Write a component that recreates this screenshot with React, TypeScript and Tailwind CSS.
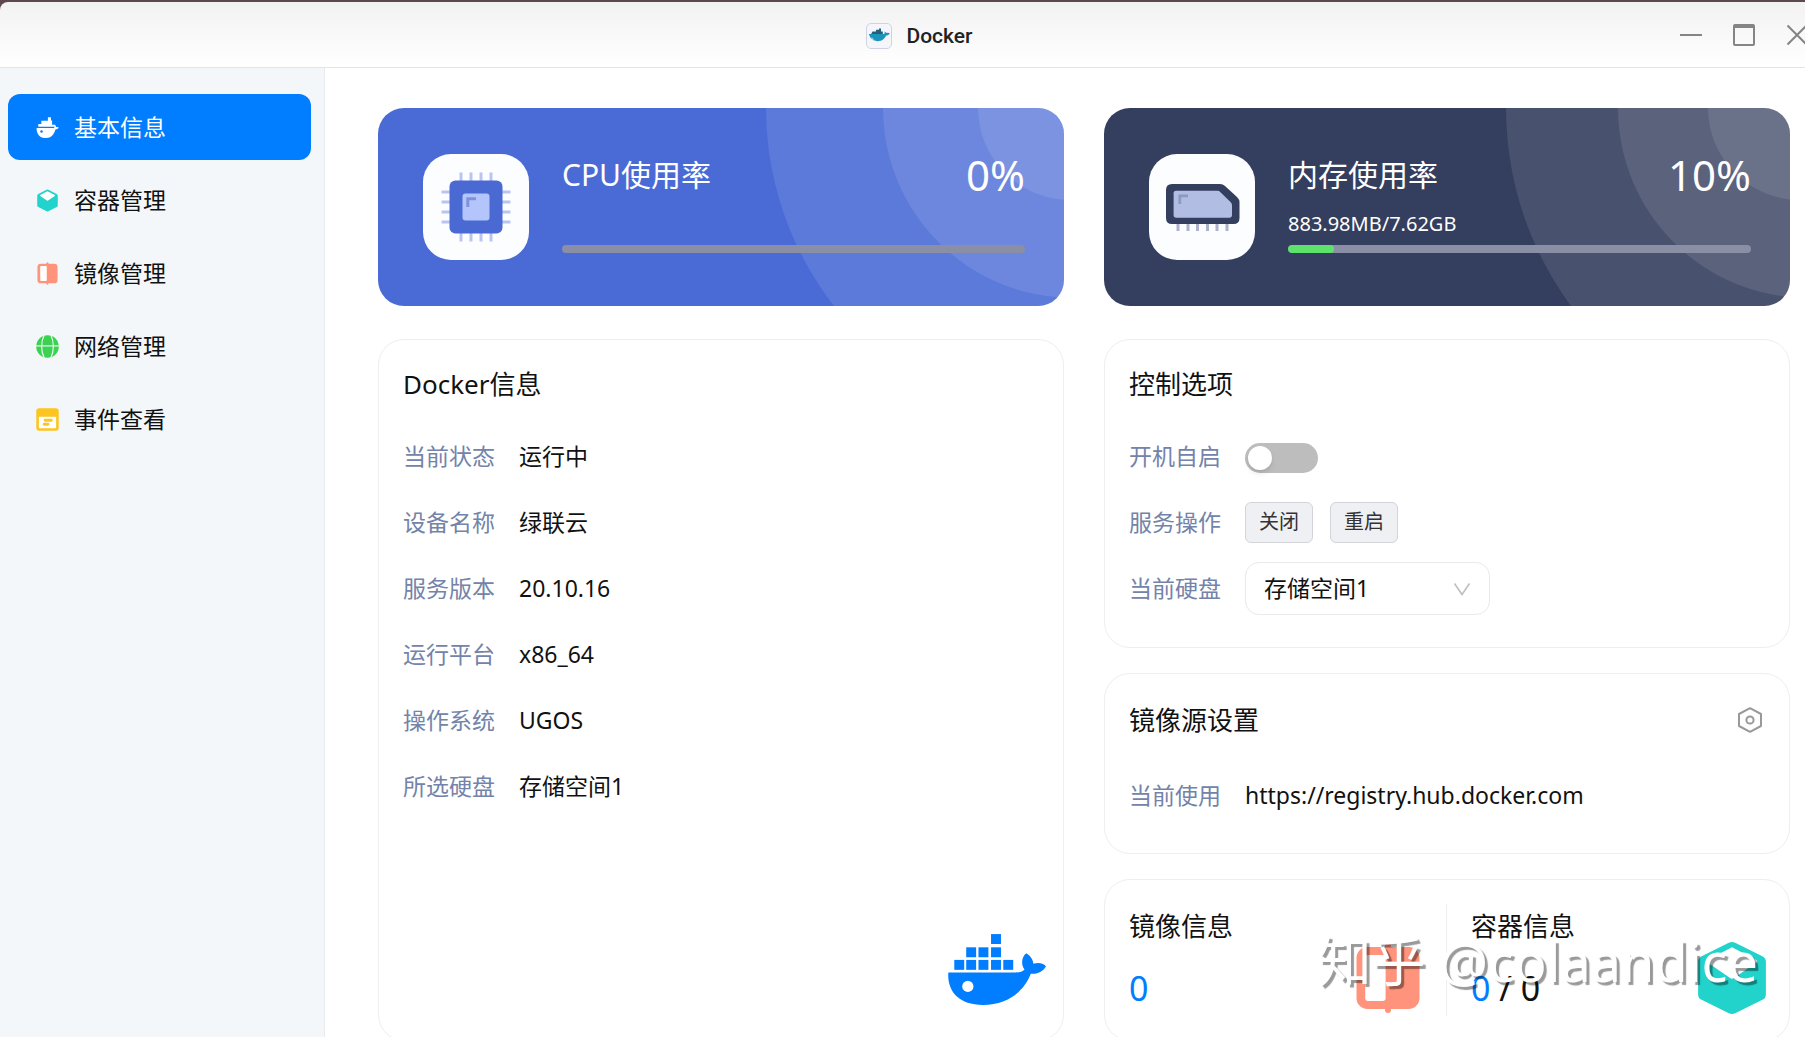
import React from 'react';

const navItems = [
  { label: '基本信息', icon: WhaleSmallIcon, active: true },
  { label: '容器管理', icon: CubeIcon, active: false },
  { label: '镜像管理', icon: MirrorIcon, active: false },
  { label: '网络管理', icon: GlobeIcon, active: false },
  { label: '事件查看', icon: EventIcon, active: false },
];

const dockerInfo = [
  { label: '当前状态', value: '运行中' },
  { label: '设备名称', value: '绿联云' },
  { label: '服务版本', value: '20.10.16' },
  { label: '运行平台', value: 'x86_64' },
  { label: '操作系统', value: 'UGOS' },
  { label: '所选硬盘', value: '存储空间1' },
];

type IconProps = { className?: string };

function WhaleSmallIcon({ className }: IconProps) {
  return (
    <svg viewBox="0 0 24 24" className={className} aria-hidden="true">
      <path d="M12.4 1.2h3.2v3.6h1.2v4.4h3.4v2H2.4V8.4h3.2V5h6.8z" fill="#fff" />
      <path d="M.6 12.4h18.2l1.4-2.4.9 1.4 2.6.3c-.6 1.6-1.9 2.3-3.4 2.4-1.5 5.2-4.7 8.9-9.7 8.9C4.2 23 .5 19.2.6 12.4z" fill="#fff" />
      <circle cx="5.8" cy="16.2" r="1.3" fill="#007eff" />
    </svg>
  );
}

function CubeIcon({ className }: IconProps) {
  return (
    <svg viewBox="0 0 24 24" className={className} aria-hidden="true">
      <path
        d="M11 .9a2.2 2.2 0 0 1 2 0l8.6 4.2a2 2 0 0 1 1.1 1.8v10.2a2 2 0 0 1-1.1 1.8L13 23.1a2.2 2.2 0 0 1-2 0l-8.6-4.2a2 2 0 0 1-1.1-1.8V6.9a2 2 0 0 1 1.1-1.8z"
        fill="#22d3cb"
      />
      <path d="M12 2.3l7.6 3.9c.5.3.5.7 0 1L12.6 12a1 1 0 0 1-1.2 0L4.4 7.2c-.5-.3-.5-.7 0-1z" fill="#fff" />
    </svg>
  );
}

function MirrorIcon({ className }: IconProps) {
  return (
    <svg viewBox="0 0 24 24" className={className} aria-hidden="true">
      <rect x="1.5" y="1.7" width="21" height="20.6" rx="3.6" fill="#ff937b" />
      <rect x="11" y=".3" width="2" height="23.4" rx="1" fill="#ff937b" />
      <rect x="4.4" y="4.3" width="6.8" height="15.4" rx="1" fill="#fff" />
    </svg>
  );
}

function GlobeIcon({ className }: IconProps) {
  return (
    <svg viewBox="0 0 24 24" className={className} aria-hidden="true">
      <circle cx="12" cy="12" r="11.8" fill="#3bd250" />
      <g fill="none" stroke="#f3f7fa" strokeWidth="1.2">
        <path d="M0 11.4h24" />
        <path d="M8.6 0c-3.6 7-3.6 17 0 24M15.4 0c3.6 7 3.6 17 0 24" />
      </g>
    </svg>
  );
}

function EventIcon({ className }: IconProps) {
  return (
    <svg viewBox="0 0 24 24" className={className} aria-hidden="true">
      <rect x=".3" y=".3" width="23.4" height="23.4" rx="3" fill="#fdc51f" />
      <rect x="3" y="9" width="18" height="12" rx=".8" fill="#fff" />
      <path d="M9.5 12.8h6.500M8.500 17h4" stroke="#fdc51f" strokeWidth="3" strokeLinecap="round" />
    </svg>
  );
}

function AppIcon() {
  return (
    <svg viewBox="0 0 26 26" className="h-[26px] w-[26px]" aria-hidden="true">
      <rect x=".5" y=".5" width="25" height="25" rx="4.5" fill="#f5f6fb" stroke="#cfd2e2" />
      <path d="M6.5 8.4H10V6.8h3V5.6h2v2.8h1.8v2.8H5z" fill="#23607a" />
      <path d="M2.8 11h14.5c1.2 0 1.7-.6 1.3-2.6l1.6 1.4 3.6.2c-.8 2-2.3 2.400-3.800 2.600-1.600 4-4.500 5.700-8.300 5.700-4.400 0-6.600-2-8-5.200z" fill="#1b94bd" />
      <path d="M6 14.2c1 2 2.6 3.6 5 4-2.6.2-4.6-1-5.800-3z" fill="#b7e4f2" />
    </svg>
  );
}

function CpuIcon() {
  return (
    <svg viewBox="0 0 106 106" className="h-full w-full" aria-hidden="true">
      <path
        d="M38 18.5v69M48 18.5v69M58 18.5v69M68 18.5v69M18.5 38h69M18.5 48h69M18.5 58h69M18.5 68h69"
        stroke="#b9c4f1"
        strokeWidth="3"
      />
      <rect x="26.5" y="26.5" width="53" height="53" rx="6" fill="#4a69d3" />
      <rect x="39.5" y="39.5" width="27" height="27" rx="3" fill="#b4c5fb" />
      <path d="M44.8 53v-8.2H53" fill="none" stroke="#7d92db" strokeWidth="3" />
    </svg>
  );
}

function MemoryIcon() {
  return (
    <svg viewBox="0 0 106 106" className="h-full w-full" aria-hidden="true">
      <path d="M29 70v7M39 70v7M48.5 70v7M58.5 70v7M68 70v7M78 70v7" stroke="#acb2cb" strokeWidth="3" />
      <path d="M23 30h48q3 0 5 2l12 11q2.5 2.5 2.5 5v16q0 6-6 6H23q-6 0-6-6V36q0-6 6-6z" fill="#343e5e" />
      <path d="M27 36.8h41.5q1.5 0 3 1.4l10 9.8q1.5 1.5 1.5 3v10q0 2.7-2.7 2.7H27.3q-2.7 0-2.7-2.7V39.5q0-2.7 2.4-2.7z" fill="#b1bde3" />
      <path d="M30.8 50v-8.2H39" fill="none" stroke="#8e98c0" strokeWidth="2.8" />
    </svg>
  );
}

function WhaleIcon() {
  return (
    <svg viewBox="0 0 296 214" className="h-[71px] w-[98px]" fill="#007eff" aria-hidden="true">
      <rect x="130" y="0" width="30" height="30" />
      <rect x="55" y="40" width="30" height="30" />
      <rect x="92" y="40" width="30" height="30" />
      <rect x="130" y="40" width="30" height="30" />
      <rect x="19" y="78" width="30" height="30" />
      <rect x="55" y="78" width="30" height="30" />
      <rect x="92" y="78" width="30" height="30" />
      <rect x="130" y="78" width="30" height="30" />
      <rect x="167" y="78" width="30" height="30" />
      <path d="M1 116H203C217 116 226 113 231 107C219 92 223 68 236 58C249 65 257 78 258 90C272 85 287 88 296 97C288 113 270 121 250 120C232 168 185 214 105 214C32 214-3 172 1 116Z" />
      <circle cx="60" cy="158" r="17" fill="#fff" />
    </svg>
  );
}

type UsageCardProps = {
  title: string;
  percent: number;
  detail?: string;
  color: string;
  icon: React.ReactNode;
  rings: { cx: number; r: number }[];
};

function UsageCard({ title, percent, detail, color, icon, rings }: UsageCardProps) {
  return (
    <section className={`relative overflow-hidden rounded-[26px] text-white ${color}`}>
      {/* Decorative rings */}
      <svg viewBox="0 0 320 198" className="absolute top-0 right-0 h-[198px] w-[320px]" aria-hidden="true">
        {rings.map((ring) => (
          <circle key={ring.r} cx={ring.cx} cy="0" r={ring.r} fill="#fff" fillOpacity="0.1" />
        ))}
      </svg>

      <div className="relative flex gap-[33px] py-[46px] pr-[39px] pl-[45px]">
        <div className="h-[106px] w-[106px] shrink-0 rounded-[28px] bg-[#fcfdff]">{icon}</div>
        <div className="flex-1">
          <div className="flex h-10 items-center justify-between">
            <h2 className="text-[30px]">{title}</h2>
            <span className="text-[42px]">{percent}%</span>
          </div>
          <p className="mt-4 h-7 text-[20px] leading-7">{detail}</p>
          <div
            className="mt-[7px] h-2 overflow-hidden rounded-full bg-[#8b8fa5]"
            role="progressbar"
            aria-label={title}
            aria-valuenow={percent}
          >
            <div className="h-full rounded-full bg-[#5de36c]" style={{ width: `${percent}%` }}></div>
          </div>
        </div>
      </div>
    </section>
  );
}

function Panel({ className, children }: { className?: string; children: React.ReactNode }) {
  return <section className={`rounded-[26px] border border-[#eeeeee] bg-white ${className}`}>{children}</section>;
}

function Row({ label, htmlFor, children }: { label: string; htmlFor?: string; children: React.ReactNode }) {
  return (
    <div className="flex h-[66px] items-center gap-6">
      {htmlFor ? (
        <label htmlFor={htmlFor} className="text-[#7383a9]">{label}</label>
      ) : (
        <span className="text-[#7383a9]">{label}</span>
      )}
      {children}
    </div>
  );
}

export default function App() {
  return (
    <div className="flex h-screen flex-col overflow-hidden bg-[#5d4750] pt-[2px] font-['Noto_Sans','Noto_Sans_CJK_SC',sans-serif] text-[23px] text-[#111111]">
      {/* Title bar */}
      <header className="grid h-[66px] shrink-0 grid-cols-[1fr_auto_1fr] items-center rounded-tl-lg border-b border-[#e4e4e4] bg-linear-to-b from-[#f2f2f2] to-white">
        <div></div>
        <div className="ml-[34px] flex items-center gap-[14px] pt-[2px]">
          <AppIcon />
          <h1 className="pt-[2px] font-['Roboto',sans-serif] text-[21px] font-medium text-[#222222]">Docker</h1>
        </div>
        <div className="flex items-center justify-end gap-[31px] text-[#858585]">
          <button type="button" aria-label="最小化">
            <svg viewBox="0 0 22 22" className="h-[22px] w-[22px]" fill="none" stroke="currentColor" strokeWidth="2">
              <path d="M0 11h22" />
            </svg>
          </button>
          <button type="button" aria-label="最大化">
            <svg viewBox="0 0 22 22" className="h-[22px] w-[22px]" fill="none" stroke="currentColor" strokeWidth="2">
              <rect x="1" y="1" width="20" height="20" rx="1" />
              <path d="M1 3h20" />
            </svg>
          </button>
          <button type="button" aria-label="关闭窗口">
            <svg viewBox="0 0 19 22" className="h-[22px] w-[19px]" fill="none" stroke="currentColor" strokeWidth="2">
              <path d="M1.5 1.5l19 19M20.5 1.5l-19 19" />
            </svg>
          </button>
        </div>
      </header>

      <div className="flex min-h-0 flex-1 bg-white">
        {/* Sidebar */}
        <nav className="flex w-[325px] shrink-0 flex-col gap-[7px] border-r border-[#e6ebf1] bg-[#f3f7fa] pt-[26px] pr-[13px] pl-2">
          {navItems.map(({ label, icon: Icon, active }) => (
            <a
              key={label}
              href="#"
              className={`flex h-[66px] items-center gap-[15px] rounded-xl pl-7 ${active ? 'bg-[#007eff] text-white' : ''}`}
            >
              <Icon className="h-[23px] w-[23px]" />
              <span>{label}</span>
            </a>
          ))}
        </nav>

        {/* Content */}
        <main className="min-w-0 flex-1 pt-10 pr-[15px] pl-[53px]">
          <div className="grid grid-cols-2 gap-x-10 gap-y-[33px]">
            <UsageCard
              title="CPU使用率"
              percent={0}
              color="bg-[#4a6bd6]"
              icon={<CpuIcon />}
              rings={[{ cx: 344, r: 322 }, { cx: 329, r: 190 }, { cx: 326, r: 92 }]}
            />
            <UsageCard
              title="内存使用率"
              percent={10}
              detail="883.98MB/7.62GB"
              color="bg-[#343e5e]"
              icon={<MemoryIcon />}
              rings={[{ cx: 370, r: 334 }, { cx: 338, r: 190 }, { cx: 330, r: 92 }]}
            />

            <Panel className="flex flex-col px-6 pt-[25px]">
              <h2 className="text-[26px] leading-[38px]">Docker信息</h2>
              <div className="mt-5">
                {dockerInfo.map((item) => (
                  <Row key={item.label} label={item.label}>
                    <span>{item.value}</span>
                  </Row>
                ))}
              </div>
              <div className="mt-auto -mr-[7px] mb-[35px] self-end">
                <WhaleIcon />
              </div>
            </Panel>

            <div className="flex flex-col gap-[25px]">
              <Panel className="px-6 pt-[25px] pb-[26px]">
                <h2 className="text-[26px] leading-[38px]">控制选项</h2>
                <div className="mt-5">
                  <Row label="开机自启" htmlFor="autostart">
                    <input
                      id="autostart"
                      type="checkbox"
                      role="switch"
                      className="mt-1 flex h-[30px] w-[73px] appearance-none items-center rounded-full bg-[#bdbdbd] px-[3px] before:h-6 before:w-6 before:rounded-full before:bg-white before:shadow-md checked:justify-end checked:bg-[#007eff]"
                    />
                  </Row>
                  <Row label="服务操作">
                    <div className="flex gap-[17px] text-[20px] text-[#333333]">
                      <button type="button" className="h-[41px] w-[68px] rounded-md border border-[#d3d4d9] bg-[#eff0f3]">
                        关闭
                      </button>
                      <button type="button" className="h-[41px] w-[68px] rounded-md border border-[#d3d4d9] bg-[#eff0f3]">
                        重启
                      </button>
                    </div>
                  </Row>
                  <Row label="当前硬盘" htmlFor="disk">
                    <div className="relative">
                      <select id="disk" className="h-[53px] w-[245px] appearance-none rounded-[14px] border border-[#e9e9e9] bg-white pl-[18px]">
                        <option>存储空间1</option>
                      </select>
                      <svg
                        viewBox="0 0 18 14"
                        className="pointer-events-none absolute top-[20px] right-[19px] h-[14px] w-[18px]"
                        fill="none"
                        stroke="#bfbfbf"
                        strokeWidth="1.6"
                      >
                        <path d="M1.5 1.5L9 12.5l7.5-11" />
                      </svg>
                    </div>
                  </Row>
                </div>
              </Panel>

              <Panel className="px-6 pt-[27px] pb-[25px]">
                <div className="flex items-center justify-between">
                  <h2 className="text-[26px] leading-[38px]">镜像源设置</h2>
                  <button type="button" aria-label="设置" className="mr-[2px] text-[#999999]">
                    <svg viewBox="0 0 26 26" className="h-[26px] w-[26px]" fill="none" stroke="currentColor" strokeWidth="2">
                      <path d="M13 1.2l11 5.8v12l-11 5.8L2 19V7z" strokeLinejoin="round" />
                      <circle cx="13" cy="13" r="3.6" />
                    </svg>
                  </button>
                </div>
                <div className="mt-[23px]">
                  <Row label="当前使用">
                    <span>https://registry.hub.docker.com</span>
                  </Row>
                </div>
              </Panel>

              <Panel className="relative grid grid-cols-2 py-6">
                <div className="flex h-[112px] justify-between border-r border-[#eeeeee] pt-[3px] pr-[22px] pl-6">
                  <div className="flex flex-col gap-6">
                    <h2 className="text-[26px] leading-[38px]">镜像信息</h2>
                    <p className="text-[34px] leading-[38px] text-[#007eff]">0</p>
                  </div>
                  <MirrorIcon className="mb-[2px] h-[72px] w-[72px] self-end" />
                </div>
                <div className="flex h-[112px] justify-between pt-[3px] pr-[19px] pl-6">
                  <div className="flex flex-col gap-6">
                    <h2 className="text-[26px] leading-[38px]">容器信息</h2>
                    <p className="text-[34px] leading-[38px]">
                      <span className="text-[#007eff]">0</span> / 0
                    </p>
                  </div>
                  <CubeIcon className="h-[76px] w-[76px] self-end" />
                </div>
                {/* Watermark */}
                <p className="pointer-events-none absolute top-[43px] right-[31px] text-[54px] leading-[76px] whitespace-nowrap text-white text-shadow-[3px_3px_1px_rgb(0_0_0_/_0.4)]">
                  知乎 @colaandice
                </p>
              </Panel>
            </div>
          </div>
        </main>
      </div>
    </div>
  );
}
